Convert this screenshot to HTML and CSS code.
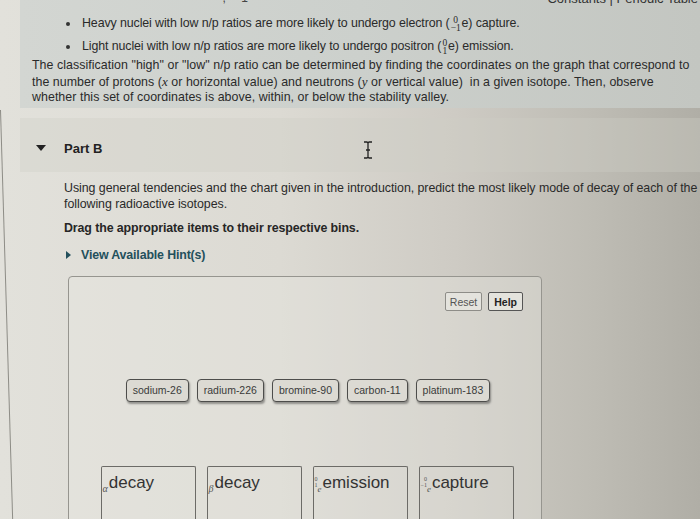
FILE: index.html
```html
<!DOCTYPE html>
<html>
<head>
<meta charset="utf-8">
<link rel="stylesheet" href="styles.css">
</head>
<body>
<div class="page">
  <div class="edge-line"></div>
  <section class="intro">
    <div class="cutoff">
      <span class="cut-left">&#8211; &#8201;, &#8201;&#8217;&#8722;1 &#8217;</span>
      <span class="cut-right">Constants | Periodic Table</span>
    </div>
    <ul class="bullets">
      <li>Heavy nuclei with low n/p ratios are more likely to undergo electron (<span class="nuc"><span class="sup">0</span><span class="sub">&#8722;1</span></span>e) capture.</li>
      <li>Light nuclei with low n/p ratios are more likely to undergo positron (<span class="nuc"><span class="sup">0</span><span class="sub">1</span></span>e) emission.</li>
    </ul>
    <p class="intro-text">The classification "high" or "low" n/p ratio can be determined by finding the coordinates on the graph that correspond to<br>the number of protons (<i class="var">x</i> or horizontal value) and neutrons (<i class="var">y</i> or vertical value)&nbsp; in a given isotope. Then, observe<br>whether this set of coordinates is above, within, or below the stability valley.</p>
  </section>

  <header class="part-head">
    <span class="tri-down"></span>
    <span class="part-title">Part B</span>
  </header>

  <section class="part-body">
    <p class="question">Using general tendencies and the chart given in the introduction, predict the most likely mode of decay of each of the<br>following radioactive isotopes.</p>
    <p class="instruction">Drag the appropriate items to their respective bins.</p>
    <div class="hint"><span class="tri-right"></span>View Available Hint(s)</div>

    <div class="dnd">
      <div class="tools">
        <button class="btn">Reset</button>
        <button class="btn btn-bold">Help</button>
      </div>
      <div class="items">
        <span class="item">sodium-26</span>
        <span class="item">radium-226</span>
        <span class="item">bromine-90</span>
        <span class="item">carbon-11</span>
        <span class="item">platinum-183</span>
      </div>
      <div class="bins">
        <div class="bin"><span class="sym">&#945;</span>decay</div>
        <div class="bin"><span class="sym">&#946;</span>decay</div>
        <div class="bin"><span class="nuc-s"><span>0</span><span>1</span></span><span class="sym-e">e</span>emission</div>
        <div class="bin"><span class="nuc-s"><span>0</span><span>&#8722;1</span></span><span class="sym-e">e</span>capture</div>
      </div>
    </div>
  </section>

  <svg class="cursor" width="10" height="18" viewBox="0 0 10 18">
    <path d="M1 1h3l1 1 1-1h3M5 2v14M1 17h3l1-1 1 1h3M3 9h4" fill="none" stroke="#222" stroke-width="1.3"/>
  </svg>
</div>
</body>
</html>
```

FILE: styles.css
```css
* { box-sizing: border-box; }
html, body { margin: 0; padding: 0; }
body {
  width: 700px;
  height: 519px;
  overflow: hidden;
  font-family: "Liberation Sans", Arial, Helvetica, sans-serif;
  color: #2a2a2a;
}
.page {
  position: relative;
  width: 700px;
  height: 519px;
  overflow: hidden;
  background: linear-gradient(90deg, #e2e1db 0%, #dcdad3 40%, #cecbc4 65%, #bebcb4 85%, #b0aea6 100%);
}
.edge-line {
  position: absolute;
  left: 0px;
  top: 110px;
  width: 1px;
  height: 420px;
  background: #8d8c86;
  transform: rotate(-1.7deg);
  transform-origin: top left;
}
.intro {
  margin-left: 20px;
  height: 108px;
  background: linear-gradient(90deg, #d3d6d2 0%, #ccd0cc 50%, #c3c6c1 100%);
  padding: 0 0 0 12px;
  position: relative;
}
.cutoff {
  height: 12px;
  position: relative;
  overflow: hidden;
  font-size: 13px;
}
.cut-left {
  position: absolute;
  left: 178px;
  top: -9px;
  font-size: 12px;
  color: #444;
}
.cut-right {
  position: absolute;
  right: 2px;
  top: -9px;
  color: #333;
}
.bullets {
  margin: 0;
  padding-left: 50px;
  font-size: 12.4px;
  list-style: none;
}
.bullets li {
  position: relative;
  line-height: 23px;
  letter-spacing: -0.1px;
  white-space: nowrap;
}
.bullets li::before {
  content: "";
  position: absolute;
  left: -16px;
  top: 10px;
  width: 4px;
  height: 4px;
  border-radius: 50%;
  background: #333;
}
.nuc {
  display: inline-flex;
  flex-direction: column;
  align-items: center;
  justify-content: center;
  height: 10px;
  font-family: "Liberation Serif", "Times New Roman", serif;
  font-size: 9.5px;
  line-height: 8px;
  vertical-align: middle;
  margin: 0 1px;
}
.intro-text {
  margin: 0;
  font-size: 12.4px;
  line-height: 15.5px;
  letter-spacing: 0.05px;
  white-space: nowrap;
}
.var {
  font-family: "Liberation Serif", "Times New Roman", serif;
  font-size: 13px;
}
.part-head {
  margin: 10px 0 0 20px;
  height: 54px;
  display: flex;
  align-items: center;
  padding-top: 6px;
  background: rgba(205, 205, 198, 0.35);
}
.tri-down {
  width: 0;
  height: 0;
  border-left: 5px solid transparent;
  border-right: 5px solid transparent;
  border-top: 6px solid #222;
  margin-left: 16px;
}
.part-title {
  margin-left: 18px;
  font-weight: bold;
  font-size: 13px;
  color: #222;
}
.part-body {
  padding-left: 64px;
  padding-top: 8px;
}
.question {
  margin: 0;
  font-size: 12.4px;
  line-height: 16px;
  letter-spacing: -0.05px;
  white-space: nowrap;
}
.instruction {
  margin: 8px 0 0 0;
  font-size: 12.4px;
  font-weight: bold;
  line-height: 16px;
  letter-spacing: -0.1px;
  color: #262626;
}
.hint {
  margin-top: 12px;
  display: flex;
  align-items: center;
  font-size: 12.4px;
  font-weight: bold;
  color: #23505c;
  letter-spacing: -0.15px;
}
.tri-right {
  width: 0;
  height: 0;
  border-top: 4px solid transparent;
  border-bottom: 4px solid transparent;
  border-left: 5px solid #23505c;
  margin: 0 10px 0 2px;
}
.dnd {
  margin: 14px 0 0 4px;
  width: 474px;
  height: 300px;
  border: 1px solid #96958f;
  border-radius: 4px 4px 0 0;
  background: rgba(232, 231, 225, 0.35);
}
.tools {
  display: flex;
  justify-content: flex-end;
  gap: 6px;
  padding: 15px 18px 0 0;
}
.btn {
  font-family: "Liberation Sans", Arial, sans-serif;
  font-size: 10.5px;
  color: #555;
  background: #e4e3dd;
  border: 1px solid #8e8d88;
  border-radius: 2px;
  height: 19px;
  padding: 0 4px;
  line-height: 16px;
}
.btn-bold {
  font-weight: bold;
  color: #222;
  border-color: #555;
  padding: 0 5px;
}
.items {
  display: flex;
  justify-content: center;
  gap: 8px;
  margin-top: 68px;
  padding-left: 6px;
}
.item {
  display: inline-block;
  height: 23px;
  line-height: 20px;
  padding: 0 6px;
  font-size: 10.5px;
  color: #3a3a3a;
  background: #dcdad3;
  border: 1.5px solid #4d4d4b;
  border-radius: 4px;
  box-shadow: 1px 2px 2px rgba(0,0,0,0.35);
}
.bins {
  display: flex;
  justify-content: center;
  gap: 11px;
  margin-top: 64px;
  padding-left: 4px;
}
.bin {
  width: 95px;
  height: 70px;
  border: 1.5px solid #6c6b67;
  border-bottom: none;
  border-radius: 2px 2px 0 0;
  font-size: 17px;
  color: #333;
  padding: 6px 0 0 1px;
  display: flex;
  align-items: flex-start;
  line-height: 20px;
}
.sym {
  font-family: "Liberation Serif", "Times New Roman", serif;
  font-style: italic;
  font-size: 10px;
  color: #555;
  margin-top: 6px;
  margin-right: 1px;
}
.nuc-s {
  display: inline-flex;
  flex-direction: column;
  align-items: flex-end;
  font-family: "Liberation Serif", "Times New Roman", serif;
  font-size: 6px;
  line-height: 6px;
  color: #555;
  margin-top: 3px;
}
.sym-e {
  font-family: "Liberation Serif", "Times New Roman", serif;
  font-style: italic;
  font-size: 9px;
  color: #555;
  margin-top: 6px;
  margin-right: 1px;
}
.cursor {
  position: absolute;
  left: 363px;
  top: 141px;
}
```
